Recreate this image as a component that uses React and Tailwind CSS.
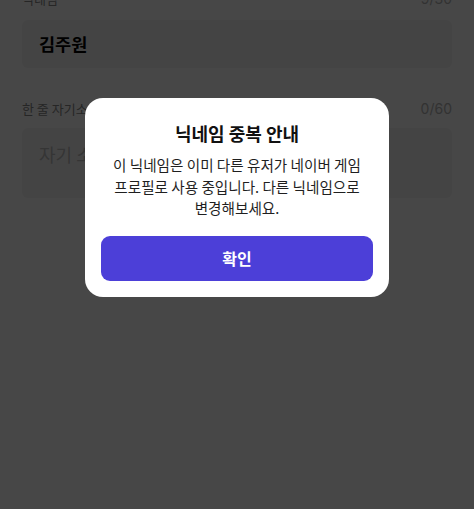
import { useState } from 'react';

const FONT = { fontFamily: '"Noto Sans CJK KR", "Noto Sans", sans-serif' };

function Field({ label, count, children }) {
  return (
    <div>
      <div className="flex items-center justify-between h-[18px]">
        <span className="text-[13px] leading-[18px] text-[#8a8a8a]">{label}</span>
        <span className="text-[14px] leading-[18px] text-[#b4b4b4] font-['Inter',sans-serif]">{count}</span>
      </div>
      {children}
    </div>
  );
}

export default function App() {
  const [open, setOpen] = useState(true);

  return (
    <div className="relative w-[474px] h-[509px] overflow-hidden bg-white" style={FONT}>
      {/* Form underneath */}
      <div className="px-[22px] -mt-[10px] flex flex-col gap-[32px]">
        <Field label="닉네임" count="9/30">
          <div className="mt-[12px] h-[48px] rounded-[6px] bg-[#f4f4f5] pl-[17px] flex items-center">
            <span className="text-[17.5px] font-bold text-black">김주원</span>
          </div>
        </Field>
        <Field label="한 줄 자기소개" count="0/60">
          <div className="mt-[10px] h-[70px] rounded-[6px] bg-[#f4f4f5] pl-[17px] pt-[13px]">
            <span className="text-[18px] leading-[26px] text-[#bdbdbd]">자기 소개를 입력해주세요</span>
          </div>
        </Field>
      </div>

      {/* Dim + dialog */}
      {open && (
        <div className="absolute inset-0 bg-black/[0.72] flex justify-center items-start pt-[98px]">
          <div className="w-[304px] bg-white rounded-[18px] px-[16px] pt-[23px] pb-[16px] flex flex-col items-center">
            <h2 className="text-[18px] leading-[24px] font-bold text-[#111]">닉네임 중복 안내</h2>
            <p className="mt-[9px] text-center text-[14.6px] leading-[21.5px] text-[#1f1f1f]">
              이 닉네임은 이미 다른 유저가 네이버 게임
              <br />
              프로필로 사용 중입니다. 다른 닉네임으로
              <br />
              변경해보세요.
            </p>
            <button
              onClick={() => setOpen(false)}
              className="mt-[17px] w-full h-[45px] rounded-[9px] bg-[#4c3fd8] text-white text-[16px] font-semibold"
            >
              확인
            </button>
          </div>
        </div>
      )}
    </div>
  );
}
